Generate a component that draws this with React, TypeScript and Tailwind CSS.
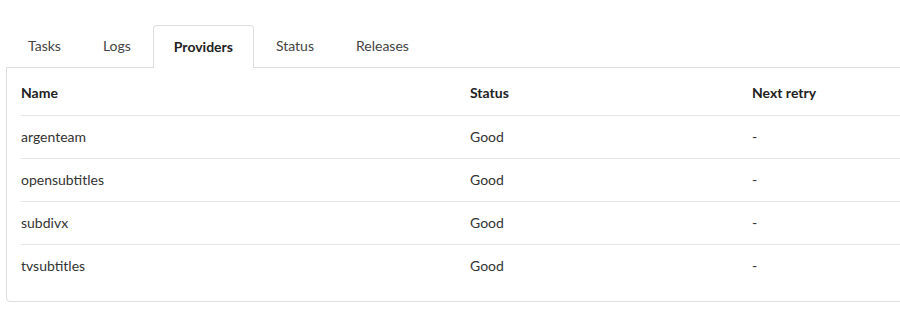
const tabs = ["Tasks", "Logs", "Providers", "Status", "Releases"];

const providers = [
  { name: "argenteam", status: "Good", retry: "-" },
  { name: "opensubtitles", status: "Good", retry: "-" },
  { name: "subdivx", status: "Good", retry: "-" },
  { name: "tvsubtitles", status: "Good", retry: "-" },
];

export default function App() {
  return (
    <div
      className="w-[900px] h-[316px] overflow-hidden bg-white text-[14px] text-[#333]"
      style={{ fontFamily: "Lato, 'Noto Sans', sans-serif" }}
    >
      <div className="pt-[25px] pl-[6px]">
        {/* Tabs */}
        <div className="flex pl-[2px]">
          {tabs.map((t) => {
            const active = t === "Providers";
            return (
              <div
                key={t}
                className={
                  active
                    ? "mr-[2px] px-[20px] h-[43px] leading-[42px] border border-b-0 border-[#ddd] rounded-t-[4px] bg-white font-bold text-[#222] relative z-10 -mb-[1px]"
                    : "mr-[2px] px-[20px] h-[42px] leading-[42px] text-[#444]"
                }
              >
                {t}
              </div>
            );
          })}
        </div>

        {/* Panel */}
        <div className="w-[920px] border border-[#ddd] rounded-b-[4px] pt-[5px] pb-[13px] pl-[14px]">
          <div className="grid grid-cols-[449px_282px_1fr] h-[43px] pb-[4px] items-center border-b border-[#e5e5e5] font-bold text-[#222]">
            <div>Name</div>
            <div>Status</div>
            <div>Next retry</div>
          </div>
          {providers.map((p, i) => (
            <div
              key={p.name}
              className={
                i < providers.length - 1
                  ? "grid grid-cols-[449px_282px_1fr] h-[43px] pb-[2px] items-center border-b border-[#e5e5e5]"
                  : "grid grid-cols-[449px_282px_1fr] h-[43px] pb-[2px] items-center"
              }
            >
              <div>{p.name}</div>
              <div>{p.status}</div>
              <div>{p.retry}</div>
            </div>
          ))}
        </div>
      </div>
    </div>
  );
}
